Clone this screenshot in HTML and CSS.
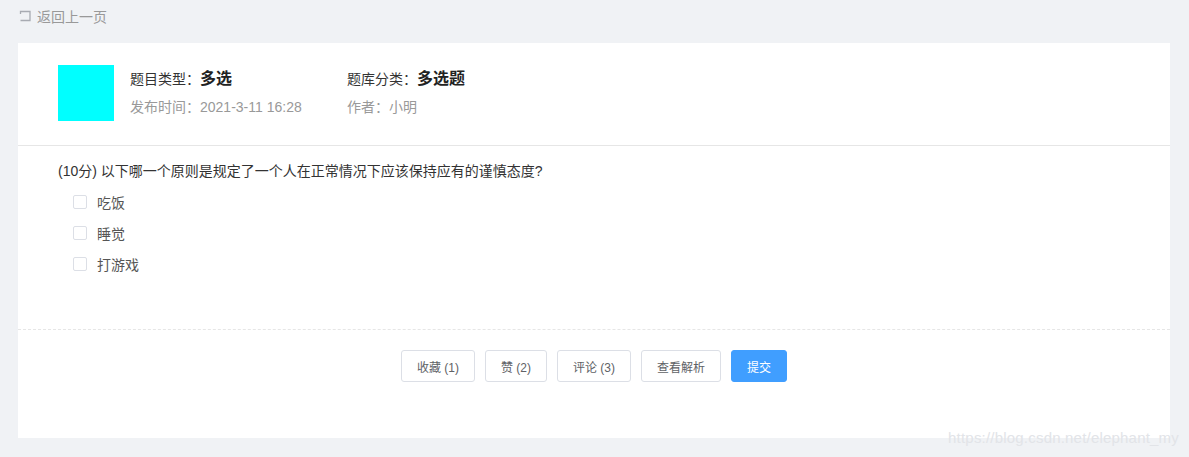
FILE: index.html
```html
<!DOCTYPE html>
<html lang="zh-CN">
<head>
<meta charset="utf-8">
<title>题目详情</title>
<link rel="stylesheet" href="styles.css">
</head>
<body>
<div class="page">
  <a class="back">
    <svg class="back-icon" width="13" height="12" viewBox="0 0 13 12" fill="none" stroke="#a8abb2" stroke-width="1.3">
      <path d="M1.5 4 L1.5 1.5 L11 1.5 L11 10.5 L1.5 10.5"/>
    </svg>
    <span>返回上一页</span>
  </a>
  <div class="card">
    <div class="head">
      <div class="avatar"></div>
      <div class="info">
        <div class="row">
          <div class="col c1"><span class="label">题目类型：</span><b class="val">多选</b></div>
          <div class="col"><span class="label">题库分类：</span><b class="val">多选题</b></div>
        </div>
        <div class="row sub">
          <div class="col c1">发布时间：2021-3-11 16:28</div>
          <div class="col">作者：小明</div>
        </div>
      </div>
    </div>
    <div class="body">
      <div class="question">(10分) 以下哪一个原则是规定了一个人在正常情况下应该保持应有的谨慎态度?</div>
      <div class="opts">
        <label class="opt"><span class="box"></span><span>吃饭</span></label>
        <label class="opt"><span class="box"></span><span>睡觉</span></label>
        <label class="opt"><span class="box"></span><span>打游戏</span></label>
      </div>
    </div>
    <div class="actions">
      <button class="btn">收藏 (1)</button>
      <button class="btn">赞 (2)</button>
      <button class="btn">评论 (3)</button>
      <button class="btn">查看解析</button>
      <button class="btn primary">提交</button>
    </div>
  </div>
  <div class="watermark">https://blog.csdn.net/elephant_my</div>
</div>
</body>
</html>
```
FILE: styles.css
```css
* { box-sizing: border-box; }
html, body { margin: 0; padding: 0; }
body {
  background: #f0f2f5;
  font-family: "Liberation Sans", "Noto Sans CJK SC", sans-serif;
  color: #333;
  font-size: 14px;
}
.page {
  position: relative;
  padding: 0 19px 0 18px;
  height: 457px;
}
.back {
  display: flex;
  align-items: center;
  height: 31px;
  color: #999;
  font-size: 14px;
  padding-left: 1px;
}
.back-icon { margin-right: 5px; margin-top: 0; }
.card {
  margin-top: 12px;
  background: #fff;
  height: 395px;
  display: flex;
  flex-direction: column;
}
.head {
  display: flex;
  padding: 22px 40px 24px;
  border-bottom: 1px solid #e6e6e6;
}
.avatar {
  width: 56px;
  height: 56px;
  background: #00ffff;
  flex-shrink: 0;
}
.info { margin-left: 16px; }
.row {
  display: flex;
  align-items: center;
  height: 24px;
}
.row.sub { margin-top: 5px; color: #999; }
.col.c1 { width: 217px; }
.label { color: #333; }
.val { font-size: 16px; font-weight: bold; color: #222; }
.body {
  padding: 14px 40px 0;
  height: 184px;
  border-bottom: 1px dashed #e6e6e6;
}
.question {
  line-height: 22px;
  color: #333;
}
.opts { margin-top: 4px; }
.opt {
  display: flex;
  align-items: center;
  height: 31px;
  padding-left: 15px;
  color: #555;
}
.box {
  width: 14px;
  height: 14px;
  border: 1px solid #dcdfe6;
  border-radius: 2px;
  margin-right: 10px;
}
.actions {
  display: flex;
  justify-content: center;
  gap: 10px;
  padding-top: 20px;
}
.btn {
  height: 32px;
  padding: 0 15px;
  border: 1px solid #dcdfe6;
  border-radius: 3px;
  background: #fff;
  color: #606266;
  font-family: inherit;
  font-size: 12px;
}
.btn.primary {
  background: #409eff;
  border-color: #409eff;
  color: #fff;
}
.watermark {
  position: absolute;
  right: 10px;
  top: 429px;
  font-size: 15px;
  color: #e2e4e8;
  letter-spacing: 0.2px;
}
```
